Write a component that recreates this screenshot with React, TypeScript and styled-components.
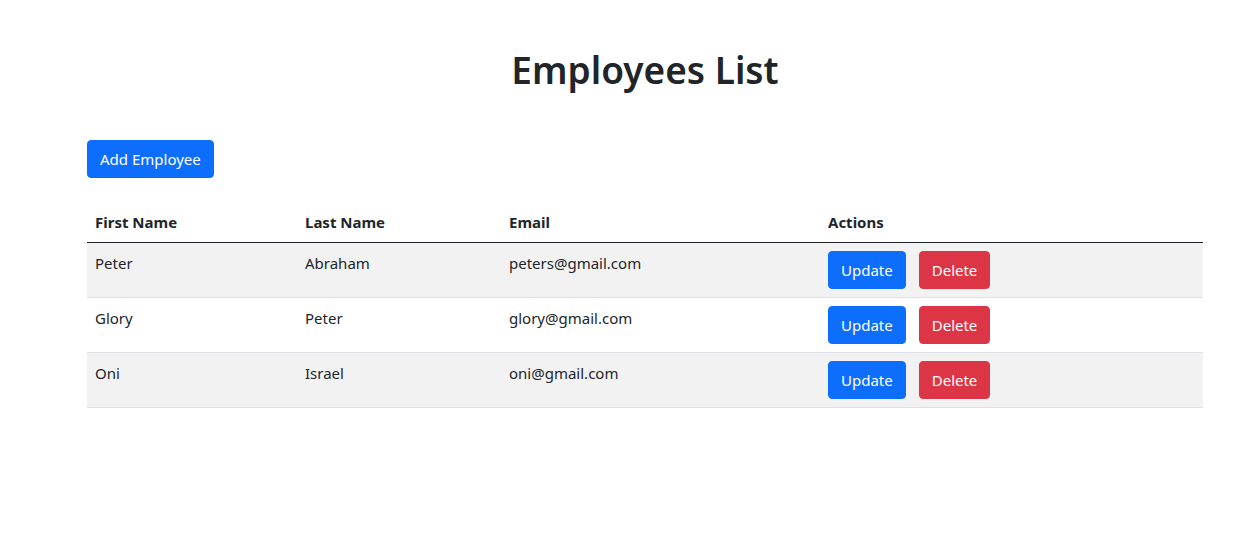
import styled, { createGlobalStyle } from 'styled-components'

const GlobalStyle = createGlobalStyle`
  *, *::before, *::after {
    box-sizing: border-box;
  }
  body {
    margin: 0;
    background: #ffffff;
    font-family: "Noto Sans", "Open Sans", sans-serif;
    color: #212529;
    font-size: 16px;
    line-height: 1.5;
  }
`

const Page = styled.div`
  width: 1203px;
  padding: 46px 0 0 87px;
`

const Title = styled.h1`
  margin: 0 0 46px;
  text-align: center;
  font-size: 37px;
  font-weight: 600;
  line-height: 48px;
  color: #212529;
`

const Button = styled.button<{ variant?: 'primary' | 'danger' }>`
  display: inline-block;
  height: 38px;
  padding: 0 12px;
  border: 1px solid ${({ variant }) => (variant === 'danger' ? '#dc3545' : '#0d6efd')};
  border-radius: 4px;
  background: ${({ variant }) => (variant === 'danger' ? '#dc3545' : '#0d6efd')};
  color: #ffffff;
  font-family: inherit;
  font-size: 15px;
  line-height: 36px;
  cursor: pointer;
`

const Toolbar = styled.div`
  margin-bottom: 24px;
`

const Table = styled.table`
  width: 100%;
  border-collapse: collapse;
  font-size: 15px;
`

const HeadCell = styled.th<{ w?: number }>`
  text-align: left;
  font-weight: 700;
  padding: 8px;
  line-height: 24px;
  border-bottom: 1px solid #212529;
  width: ${({ w }) => (w ? `${w}px` : 'auto')};
`

const Row = styled.tr<{ striped?: boolean }>`
  background: ${({ striped }) => (striped ? '#f2f2f2' : '#ffffff')};
  border-bottom: 1px solid #dee2e6;
`

const Cell = styled.td`
  padding: 8px;
  line-height: 24px;
  vertical-align: top;
`

const Actions = styled.div`
  display: flex;
  gap: 13px;
`

const employees = [
  { first: 'Peter', last: 'Abraham', email: 'peters@gmail.com' },
  { first: 'Glory', last: 'Peter', email: 'glory@gmail.com' },
  { first: 'Oni', last: 'Israel', email: 'oni@gmail.com' },
]

export default function App() {
  return (
    <>
      <GlobalStyle />
      <Page>
        <Title>Employees List</Title>
        <Toolbar>
          <Button>Add Employee</Button>
        </Toolbar>
        <Table>
          <thead>
            <tr>
              <HeadCell w={210}>First Name</HeadCell>
              <HeadCell w={204}>Last Name</HeadCell>
              <HeadCell w={319}>Email</HeadCell>
              <HeadCell>Actions</HeadCell>
            </tr>
          </thead>
          <tbody>
            {employees.map((e, i) => (
              <Row key={e.email} striped={i % 2 === 0}>
                <Cell>{e.first}</Cell>
                <Cell>{e.last}</Cell>
                <Cell>{e.email}</Cell>
                <Cell>
                  <Actions>
                    <Button>Update</Button>
                    <Button variant="danger">Delete</Button>
                  </Actions>
                </Cell>
              </Row>
            ))}
          </tbody>
        </Table>
      </Page>
    </>
  )
}
